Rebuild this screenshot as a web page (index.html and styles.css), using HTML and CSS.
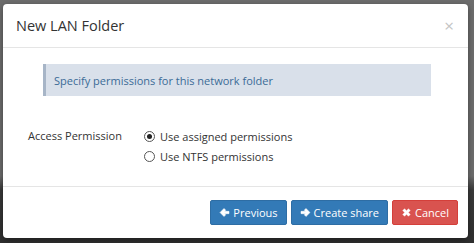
FILE: index.html
```html
<!DOCTYPE html>
<html>
<head>
<meta charset="utf-8">
<link rel="stylesheet" href="styles.css">
</head>
<body>
<div class="backdrop">
  <div class="modal">
    <div class="modal-header">
      <span class="modal-title">New LAN Folder</span>
      <span class="close">&times;</span>
    </div>
    <div class="modal-body">
      <div class="alert">Specify permissions for this network folder</div>
      <div class="form-row">
        <div class="label">Access Permission</div>
        <div class="options">
          <label class="radio"><span class="dot checked"></span>Use assigned permissions</label>
          <label class="radio"><span class="dot"></span>Use NTFS permissions</label>
        </div>
      </div>
    </div>
    <div class="modal-footer">
      <button class="btn btn-primary"><svg class="ic" viewBox="0 0 16 16"><path d="M1.5 8 L7.3 2.2 L9.8 4.7 L7.9 6.3 H14.5 V9.7 H7.9 L9.8 11.3 L7.3 13.8 Z" fill="#fff" stroke="#fff" stroke-width="0.8" stroke-linejoin="round"/></svg>Previous</button>
      <button class="btn btn-primary"><svg class="ic" viewBox="0 0 16 16"><path d="M14.5 8 L8.7 2.2 L6.2 4.7 L8.1 6.3 H1.5 V9.7 H8.1 L6.2 11.3 L8.7 13.8 Z" fill="#fff" stroke="#fff" stroke-width="0.8" stroke-linejoin="round"/></svg>Create share</button>
      <button class="btn btn-danger"><svg class="ic ic-x" viewBox="0 0 16 16"><path d="M2.5 5.2 L5.2 2.5 L8 5.3 L10.8 2.5 L13.5 5.2 L10.7 8 L13.5 10.8 L10.8 13.5 L8 10.7 L5.2 13.5 L2.5 10.8 L5.3 8 Z" fill="#fff" stroke="#fff" stroke-width="0.6" stroke-linejoin="round"/></svg>Cancel</button>
    </div>
  </div>
</div>
</body>
</html>
```

FILE: styles.css
```css
html, body {
  margin: 0;
  padding: 0;
}
body {
  width: 474px;
  height: 243px;
  overflow: hidden;
  font-family: "Open Sans", "Segoe UI", sans-serif;
}
.backdrop {
  width: 474px;
  height: 243px;
  padding: 4px 0 0 3px;
  box-sizing: border-box;
  background: linear-gradient(to bottom, #6d6d6d 0, #6d6d6d 176px, #3a3a3a 190px, #2f2f2f 100%);
}
.modal {
  width: 465px;
  height: 234px;
  background: #fff;
  border-radius: 4px;
  box-shadow: 0 2px 6px rgba(0,0,0,0.4);
  display: flex;
  flex-direction: column;
  overflow: hidden;
}
.modal-header {
  height: 43px;
  border-bottom: 1px solid #e5e5e5;
  display: flex;
  align-items: center;
  justify-content: space-between;
  padding: 0 14px 0 13px;
}
.modal-title {
  font-size: 14.5px;
  color: #333;
}
.close {
  font-size: 17px;
  color: #c4c4c4;
  line-height: 1;
}
.modal-body {
  height: 138px;
  padding: 16px 37px 0 40px;
  box-sizing: border-box;
}
.alert {
  height: 32px;
  background: #d9e0ea;
  border-left: 3px solid #a7b5c7;
  box-sizing: border-box;
  padding-left: 8px;
  display: flex;
  align-items: center;
  font-size: 11px;
  color: #3b6b97;
}
.form-row {
  display: flex;
  margin-top: 30px;
  margin-left: -15px;
  font-size: 11px;
  color: #333;
}
.label {
  width: 116px;
  line-height: 20px;
}
.options {
  display: flex;
  flex-direction: column;
}
.radio {
  display: flex;
  align-items: center;
  height: 20px;
}
.dot {
  width: 11px;
  height: 11px;
  border: 1px solid #555;
  border-radius: 50%;
  margin-right: 5px;
  box-sizing: border-box;
  position: relative;
}
.dot.checked::after {
  content: "";
  position: absolute;
  left: 2px;
  top: 2px;
  width: 5px;
  height: 5px;
  border-radius: 50%;
  background: #222;
}
.modal-footer {
  flex: 1;
  border-top: 1px solid #e5e5e5;
  display: flex;
  justify-content: flex-end;
  align-items: center;
  padding: 0 10px 0 0;
  gap: 4px;
}
.btn {
  height: 25px;
  border-radius: 2px;
  font-family: "Open Sans", "Segoe UI", sans-serif;
  font-size: 11px;
  color: #fff;
  display: flex;
  align-items: center;
  padding: 0 8px;
  box-sizing: border-box;
  cursor: pointer;
}
.btn-primary {
  background: #337ab7;
  border: 1px solid #2e6da4;
}
.btn-danger {
  background: #d9534f;
  border: 1px solid #d43f3a;
}
.ic {
  width: 11px;
  height: 11px;
  margin-right: 3px;
}
```
